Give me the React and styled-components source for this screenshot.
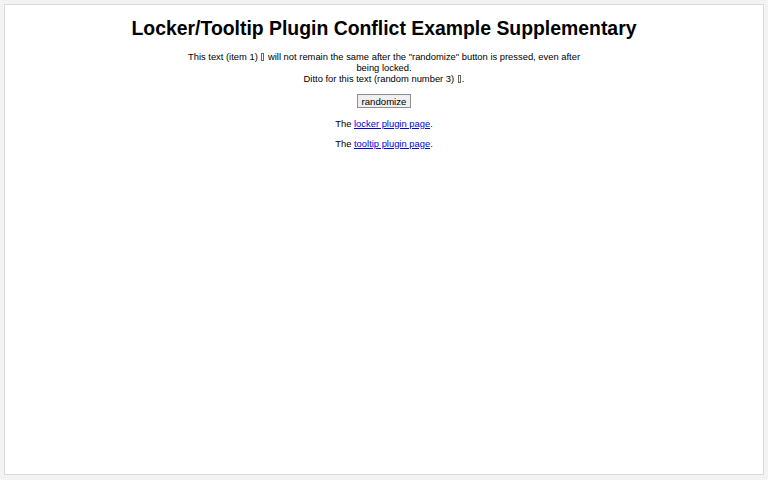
import React, { useState } from "react";
import styled, { createGlobalStyle } from "styled-components";

const GlobalStyle = createGlobalStyle`
    html, body {
        margin: 0;
        padding: 0;
        background: #f3f3f3;
    }
    body {
        padding: 4px 4px 5px 4px;
        font-family: "Liberation Sans", Arial, sans-serif;
    }
`

const Page = styled.div`
    box-sizing: border-box;
    height: 471px;
    background: #ffffff;
    border: 1px solid #d9d9d9;
    padding-top: 12px;
    text-align: center;
    color: #000;
`

const Titulo = styled.h1`
    margin: 0 0 12px 0;
    font-size: 19.4px;
    font-weight: bold;
    line-height: 22px;
`

const Texto = styled.div`
    width: 400px;
    margin: 0 auto;
    font-size: 9.4px;
    line-height: 11px;
`

/* caixinha do ícone que não carregou */
const Glifo = styled.span`
    display: inline-block;
    box-sizing: border-box;
    width: 3px;
    height: 8px;
    border: 1px solid #666;
    vertical-align: -1px;
    margin: 0 1px;
`

const Botao = styled.button`
    margin-top: 10px;
    font-family: "Liberation Sans", Arial, sans-serif;
    font-size: 9.6px;
    line-height: 11px;
    padding: 0 4px;
    height: 14px;
    background: #efefef;
    border: 1px solid #8f8f8f;
    border-radius: 0;
    color: #000;
`

const Paragrafo = styled.p`
    margin: 9px 0 0 0;
    font-size: 9.4px;
    line-height: 11px;
`

const Link = styled.a`
    color: #0000ee;
    text-decoration: underline;
`

function App() {
    const [item, setItem] = useState(1);
    const [numero, setNumero] = useState(3);

    const randomize = () => {
        setItem(Math.ceil(Math.random() * 9));
        setNumero(Math.ceil(Math.random() * 9));
    }

    return (
        <>
            <GlobalStyle />
            <Page>
                <Titulo>Locker/Tooltip Plugin Conflict Example Supplementary</Titulo>
                <Texto>
                    This text (item {item}) <Glifo /> will not remain the same after the "randomize" button is pressed, even after being locked.
                    <br />
                    Ditto for this text (random number {numero}) <Glifo />.
                </Texto>
                <Botao onClick={randomize}>randomize</Botao>
                <Paragrafo>The <Link href="#">locker plugin page</Link>.</Paragrafo>
                <Paragrafo>The <Link href="#">tooltip plugin page</Link>.</Paragrafo>
            </Page>
        </>
    )
}

export default App;
